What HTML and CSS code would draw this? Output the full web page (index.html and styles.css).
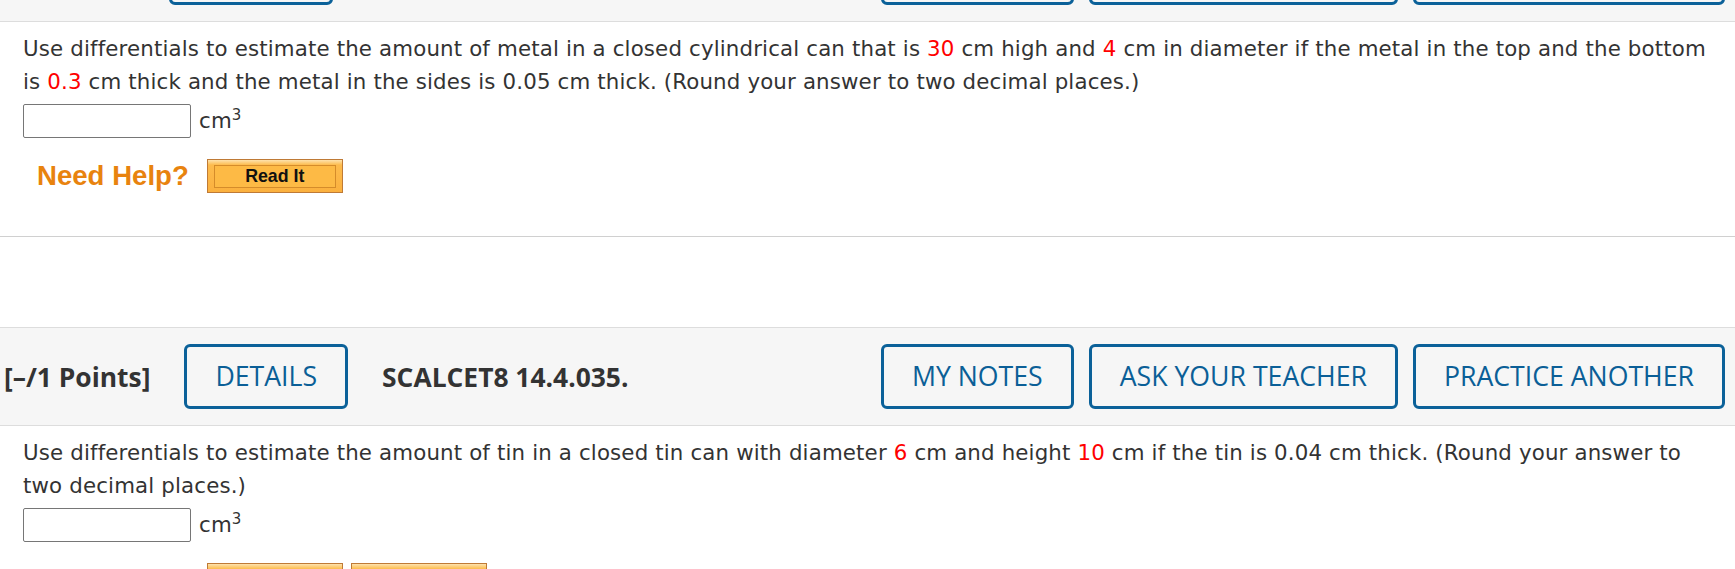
FILE: index.html
```html
<!DOCTYPE html>
<html lang="en">
<head>
<meta charset="utf-8">
<title>Questions</title>
<link rel="stylesheet" href="styles.css">
</head>
<body>
<div class="question">
  <div class="qhead qhead--prev">
    <span class="points points--prev">[–/1 Points]</span>
    <button class="qbtn">DETAILS</button>
    <span class="qcode">SCALCET8 14.4.034.</span>
    <div class="actions">
      <button class="qbtn">MY NOTES</button>
      <button class="qbtn">ASK YOUR TEACHER</button>
      <button class="qbtn">PRACTICE ANOTHER</button>
    </div>
  </div>
  <div class="qbody">
    <p class="prompt">Use differentials to estimate the amount of metal in a closed cylindrical can that is <span class="num">30</span> cm high and <span class="num">4</span> cm in diameter if the metal in the top and the bottom is <span class="num">0.3</span> cm thick and the metal in the sides is 0.05 cm thick. (Round your answer to two decimal places.)</p>
    <div class="answer">
      <input class="field" type="text" aria-label="answer">
      <span class="unit">cm<sup>3</sup></span>
    </div>
    <div class="help">
      <span class="help-label">Need Help?</span>
      <div class="help-buttons">
        <span class="helpbtn"><span class="helpbtn-inner">Read It</span></span>
      </div>
    </div>
  </div>
</div>

<div class="question">
  <div class="qhead">
    <span class="points">[–/1 Points]</span>
    <button class="qbtn">DETAILS</button>
    <span class="qcode">SCALCET8 14.4.035.</span>
    <div class="actions">
      <button class="qbtn">MY NOTES</button>
      <button class="qbtn">ASK YOUR TEACHER</button>
      <button class="qbtn">PRACTICE ANOTHER</button>
    </div>
  </div>
  <div class="qbody">
    <p class="prompt">Use differentials to estimate the amount of tin in a closed tin can with diameter <span class="num">6</span> cm and height <span class="num">10</span> cm if the tin is 0.04 cm thick. (Round your answer to two decimal places.)</p>
    <div class="answer">
      <input class="field" type="text" aria-label="answer">
      <span class="unit">cm<sup>3</sup></span>
    </div>
    <div class="help">
      <span class="help-label">Need Help?</span>
      <div class="help-buttons">
        <span class="helpbtn"><span class="helpbtn-inner">Read It</span></span>
        <span class="helpbtn"><span class="helpbtn-inner">Watch It</span></span>
      </div>
    </div>
  </div>
</div>
</body>
</html>
```
FILE: styles.css
```css
* {
  box-sizing: border-box;
}

html, body {
  margin: 0;
  padding: 0;
  background: #ffffff;
  overflow: hidden;
}

body {
  font-family: "DejaVu Sans", Verdana, sans-serif;
  color: #333333;
}

.question {
  border-bottom: 1px solid #d0d0d0;
  margin-bottom: 90px;
}

.qhead {
  display: flex;
  align-items: center;
  height: 99px;
  padding: 0 10px 0 4px;
  background: #f6f6f6;
  border-top: 1px solid #dddddd;
  border-bottom: 1px solid #dddddd;
}

.qhead--prev {
  margin-top: -77px;
}

.points,
.qcode {
  font-family: "Open Sans", "DejaVu Sans", sans-serif;
  font-weight: 700;
  font-size: 26.4px;
  color: #333333;
  white-space: nowrap;
}

.points {
  margin-right: 34px;
}

.points--prev {
  margin-right: 19px;
}

.qcode {
  margin-left: 34px;
}

.qbtn {
  font-family: "Open Sans", "DejaVu Sans", sans-serif;
  font-size: 26.67px;
  font-weight: 500;
  line-height: 1;
  color: #0b5f97;
  background: transparent;
  border: 3px solid #0b6199;
  border-radius: 6px;
  height: 65px;
  padding: 0 28px;
  white-space: nowrap;
  cursor: pointer;
}

.actions {
  margin-left: auto;
  display: flex;
  gap: 15px;
}

.qbody {
  padding: 10px 23px 43px 23px;
}

.prompt {
  margin: 0;
  font-size: 21.33px;
  line-height: 33px;
  letter-spacing: 0.15px;
}

.num {
  color: #ff0000;
}

.answer {
  display: flex;
  align-items: flex-start;
  gap: 8px;
  margin-top: 6px;
}

.field {
  width: 168px;
  height: 34px;
  margin: 0;
  border: 1px solid #767676;
  border-radius: 2px;
  background: #ffffff;
}

.unit {
  font-size: 21.33px;
  line-height: 33px;
  letter-spacing: 0.15px;
}

.unit sup {
  font-size: 15px;
  line-height: 0;
}

.help {
  display: flex;
  align-items: center;
  gap: 18px;
  margin-top: 21px;
  padding-left: 14px;
}

.help-label {
  font-family: "Liberation Sans", Arial, sans-serif;
  font-weight: 700;
  font-size: 27.6px;
  color: #e8830e;
}

.help-buttons {
  display: flex;
  gap: 8px;
}

.helpbtn {
  display: flex;
  width: 136px;
  height: 34px;
  padding: 5px 6px 4px 6px;
  border: 1px solid #bf7a36;
  background: linear-gradient(#fde2ad 0, #fdbb4c 5px, #fbb13f 100%);
}

.helpbtn-inner {
  flex: 1;
  display: flex;
  align-items: center;
  justify-content: center;
  border: 1px solid #d58c2a;
  background: #fdba45;
  font-family: "Liberation Sans", Arial, sans-serif;
  font-weight: 700;
  font-size: 17.8px;
  color: #111111;
}
```
